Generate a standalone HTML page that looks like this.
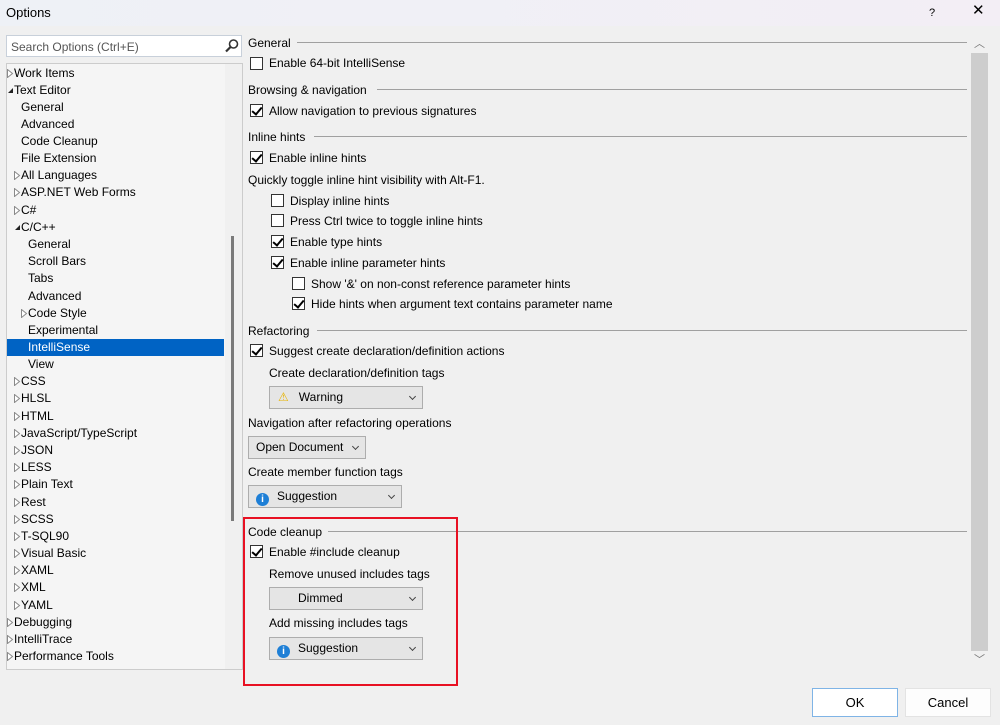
<!DOCTYPE html>
<html><head><meta charset="utf-8"><style>
*{margin:0;padding:0;box-sizing:border-box}
body{width:1000px;height:725px;background:#f0f0f0;font-family:"Liberation Sans",sans-serif;font-size:12px;color:#000;position:relative;overflow:hidden}
.a{position:absolute;white-space:nowrap;line-height:16px}
.title{position:absolute;left:0;top:0;width:1000px;height:26px;background:linear-gradient(90deg,#eef1f6,#f3eef5);}
.cb{position:absolute;width:13px;height:13px;border:1px solid #333;background:#fff}
.cb.c::after{content:"";position:absolute;left:3px;top:0px;width:4px;height:8px;border:solid #000;border-width:0 2px 2px 0;transform:rotate(40deg)}
.hr{position:absolute;height:1px;background:#a0a0a0;right:33px}
.dd{position:absolute;height:23px;border:1px solid #adadad;background:#e5e5e5;line-height:21px;padding-left:7px}
.dd .ar{position:absolute;right:7px;top:7px;width:5px;height:5px;border:solid #444;border-width:0 1px 1px 0;transform:rotate(45deg)}
.tree .a{line-height:17px}
.tri{display:inline-block;width:7px;height:9px;vertical-align:-1px}
.info{display:inline-block;width:13px;height:13px;border-radius:50%;background:#1e7fd6;color:#fff;font-size:10px;font-weight:bold;text-align:center;line-height:13px;vertical-align:-2px;margin-right:8px}
.rl{position:absolute;background:#e81123}
</style></head><body>
<svg width="0" height="0" style="position:absolute"><defs>
<symbol id="t" viewBox="0 0 7 9"><path d="M0.5 0.5 L5.5 4.5 L0.5 8.5 Z" fill="#fff" stroke="#8a8a8a" stroke-width="1"/></symbol>
<symbol id="e" viewBox="0 0 7 9"><path d="M6 2 L6 7 L1 7 Z" fill="#222"/></symbol>
</defs></svg>
<div class="title"></div>
<div class="a" style="left:6px;top:5px;font-size:13px">Options</div>
<div class="a" style="left:929px;top:5px;font-size:11px">?</div>
<div class="a" style="left:972px;top:3px;font-size:15px">✕</div>

<div style="position:absolute;left:6px;top:35px;width:236px;height:22px;border:1px solid #c8d0da;background:#fff"></div>
<div class="a" style="left:11px;top:39px;color:#555">Search Options (Ctrl+E)</div>
<svg style="position:absolute;left:224px;top:38px" width="16" height="16"><circle cx="9.5" cy="6" r="4" fill="none" stroke="#333" stroke-width="1.6"/><line x1="6.5" y1="9" x2="2" y2="13.5" stroke="#333" stroke-width="2.2"/></svg>

<div style="position:absolute;left:6px;top:63px;width:237px;height:607px;border:1px solid #ccc;background:#f5f5f5"></div>
<div style="position:absolute;left:225px;top:64px;width:17px;height:605px;background:#f0f0f0"></div>
<div style="position:absolute;left:231px;top:236px;width:3px;height:285px;background:#7a7a7a"></div>
<div style="position:absolute;left:7px;top:339px;width:217px;height:17px;background:#0063c4"></div>
<div class="tree">
<div class="a" style="left:7px;top:65px"><svg class="tri"><use href="#t"/></svg>Work Items</div>
<div class="a" style="left:7px;top:82px"><svg class="tri"><use href="#e"/></svg>Text Editor</div>
<div class="a" style="left:21px;top:99px">General</div>
<div class="a" style="left:21px;top:116px">Advanced</div>
<div class="a" style="left:21px;top:133px">Code Cleanup</div>
<div class="a" style="left:21px;top:150px">File Extension</div>
<div class="a" style="left:14px;top:167px"><svg class="tri"><use href="#t"/></svg>All Languages</div>
<div class="a" style="left:14px;top:184px"><svg class="tri"><use href="#t"/></svg>ASP.NET Web Forms</div>
<div class="a" style="left:14px;top:202px"><svg class="tri"><use href="#t"/></svg>C#</div>
<div class="a" style="left:14px;top:219px"><svg class="tri"><use href="#e"/></svg>C/C++</div>
<div class="a" style="left:28px;top:236px">General</div>
<div class="a" style="left:28px;top:253px">Scroll Bars</div>
<div class="a" style="left:28px;top:270px">Tabs</div>
<div class="a" style="left:28px;top:288px">Advanced</div>
<div class="a" style="left:21px;top:305px"><svg class="tri"><use href="#t"/></svg>Code Style</div>
<div class="a" style="left:28px;top:322px">Experimental</div>
<div class="a" style="left:28px;top:339px;color:#fff">IntelliSense</div>
<div class="a" style="left:28px;top:356px">View</div>
<div class="a" style="left:14px;top:373px"><svg class="tri"><use href="#t"/></svg>CSS</div>
<div class="a" style="left:14px;top:390px"><svg class="tri"><use href="#t"/></svg>HLSL</div>
<div class="a" style="left:14px;top:408px"><svg class="tri"><use href="#t"/></svg>HTML</div>
<div class="a" style="left:14px;top:425px"><svg class="tri"><use href="#t"/></svg>JavaScript/TypeScript</div>
<div class="a" style="left:14px;top:442px"><svg class="tri"><use href="#t"/></svg>JSON</div>
<div class="a" style="left:14px;top:459px"><svg class="tri"><use href="#t"/></svg>LESS</div>
<div class="a" style="left:14px;top:476px"><svg class="tri"><use href="#t"/></svg>Plain Text</div>
<div class="a" style="left:14px;top:494px"><svg class="tri"><use href="#t"/></svg>Rest</div>
<div class="a" style="left:14px;top:511px"><svg class="tri"><use href="#t"/></svg>SCSS</div>
<div class="a" style="left:14px;top:528px"><svg class="tri"><use href="#t"/></svg>T-SQL90</div>
<div class="a" style="left:14px;top:545px"><svg class="tri"><use href="#t"/></svg>Visual Basic</div>
<div class="a" style="left:14px;top:562px"><svg class="tri"><use href="#t"/></svg>XAML</div>
<div class="a" style="left:14px;top:579px"><svg class="tri"><use href="#t"/></svg>XML</div>
<div class="a" style="left:14px;top:597px"><svg class="tri"><use href="#t"/></svg>YAML</div>
<div class="a" style="left:7px;top:614px"><svg class="tri"><use href="#t"/></svg>Debugging</div>
<div class="a" style="left:7px;top:631px"><svg class="tri"><use href="#t"/></svg>IntelliTrace</div>
<div class="a" style="left:7px;top:648px"><svg class="tri"><use href="#t"/></svg>Performance Tools</div>
</div>

<div class="a" style="left:974px;top:36px;color:#777;font-size:11px">︿</div>
<div style="position:absolute;left:971px;top:53px;width:17px;height:598px;background:#cdcdcd"></div>
<div class="a" style="left:974px;top:652px;color:#777;font-size:11px">﹀</div>

<div class="a" style="left:248px;top:35px">General</div><div class="hr" style="left:297px;top:42px"></div>
<div class="cb" style="left:250px;top:57px"></div><div class="a" style="left:269px;top:55px">Enable 64-bit IntelliSense</div>
<div class="a" style="left:248px;top:82px">Browsing &amp; navigation</div><div class="hr" style="left:377px;top:89px"></div>
<div class="cb c" style="left:250px;top:104px"></div><div class="a" style="left:269px;top:103px">Allow navigation to previous signatures</div>
<div class="a" style="left:248px;top:129px">Inline hints</div><div class="hr" style="left:314px;top:136px"></div>
<div class="cb c" style="left:250px;top:151px"></div><div class="a" style="left:269px;top:150px">Enable inline hints</div>
<div class="a" style="left:248px;top:172px">Quickly toggle inline hint visibility with Alt-F1.</div>
<div class="cb" style="left:271px;top:194px"></div><div class="a" style="left:290px;top:193px">Display inline hints</div>
<div class="cb" style="left:271px;top:214px"></div><div class="a" style="left:290px;top:213px">Press Ctrl twice to toggle inline hints</div>
<div class="cb c" style="left:271px;top:235px"></div><div class="a" style="left:290px;top:234px">Enable type hints</div>
<div class="cb c" style="left:271px;top:256px"></div><div class="a" style="left:290px;top:255px">Enable inline parameter hints</div>
<div class="cb" style="left:292px;top:277px"></div><div class="a" style="left:311px;top:276px">Show '&amp;' on non-const reference parameter hints</div>
<div class="cb c" style="left:292px;top:297px"></div><div class="a" style="left:311px;top:296px">Hide hints when argument text contains parameter name</div>
<div class="a" style="left:248px;top:323px">Refactoring</div><div class="hr" style="left:317px;top:330px"></div>
<div class="cb c" style="left:250px;top:344px"></div><div class="a" style="left:269px;top:343px">Suggest create declaration/definition actions</div>
<div class="a" style="left:269px;top:365px">Create declaration/definition tags</div>
<div class="dd" style="left:269px;top:386px;width:154px;padding-left:8px"><span style="color:#e8b400;font-size:12px;margin-right:10px">⚠</span>Warning<span class="ar"></span></div>
<div class="a" style="left:248px;top:415px">Navigation after refactoring operations</div>
<div class="dd" style="left:248px;top:436px;width:118px"><span>Open Document</span><span class="ar"></span></div>
<div class="a" style="left:248px;top:464px">Create member function tags</div>
<div class="dd" style="left:248px;top:485px;width:154px"><span class="info">i</span>Suggestion<span class="ar"></span></div>
<div class="a" style="left:248px;top:524px">Code cleanup</div><div class="hr" style="left:328px;top:531px"></div>
<div class="cb c" style="left:250px;top:545px"></div><div class="a" style="left:269px;top:544px">Enable #include cleanup</div>
<div class="a" style="left:269px;top:566px">Remove unused includes tags</div>
<div class="dd" style="left:269px;top:587px;width:154px;padding-left:28px">Dimmed<span class="ar"></span></div>
<div class="a" style="left:269px;top:615px">Add missing includes tags</div>
<div class="dd" style="left:269px;top:637px;width:154px"><span class="info">i</span>Suggestion<span class="ar"></span></div>
<div class="rl" style="left:243px;top:517px;width:215px;height:2px"></div>
<div class="rl" style="left:243px;top:684px;width:215px;height:2px"></div>
<div class="rl" style="left:243px;top:517px;width:2px;height:169px"></div>
<div class="rl" style="left:456px;top:517px;width:2px;height:169px"></div>

<div style="position:absolute;left:812px;top:688px;width:86px;height:29px;border:1px solid #7fb4e6;background:#fff;text-align:center;line-height:27px;font-size:13px">OK</div>
<div style="position:absolute;left:905px;top:688px;width:86px;height:29px;border:1px solid #e3e3e3;background:#fdfdfd;text-align:center;line-height:27px;font-size:13px">Cancel</div>
</body></html>
